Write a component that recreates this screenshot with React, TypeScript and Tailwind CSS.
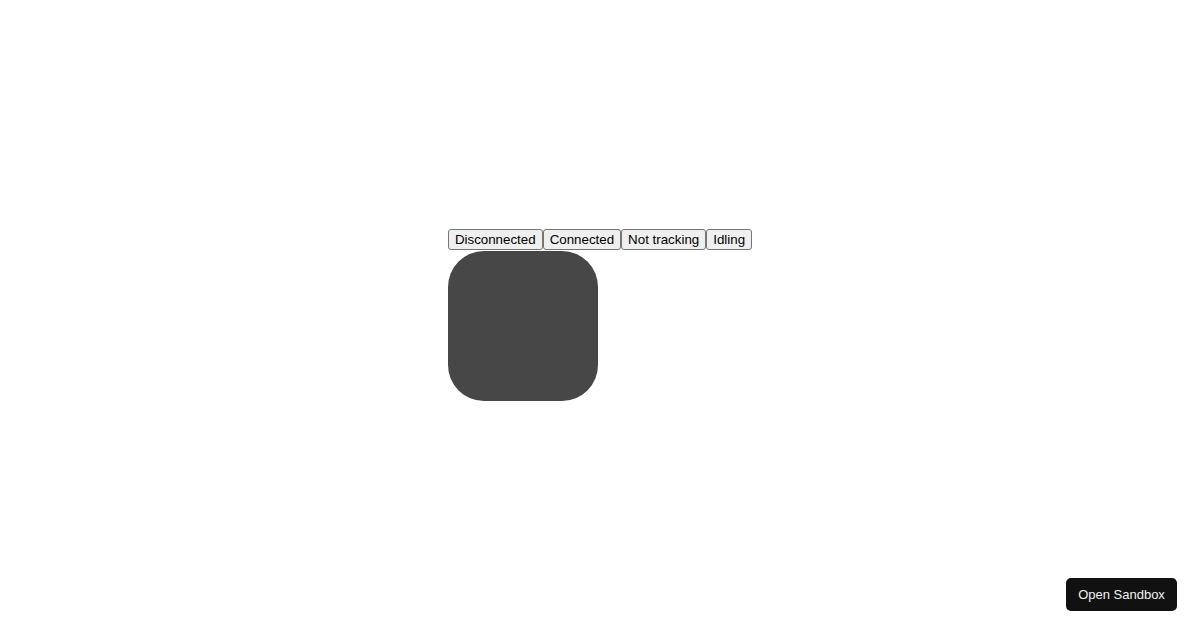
export default function App() {
  const states = ['Disconnected', 'Connected', 'Not tracking', 'Idling']

  return (
    <div className="relative flex h-[630px] w-full items-center justify-center bg-white font-['Liberation_Sans',Arial,sans-serif]">
      <div className="flex flex-col">
        <div className="flex">
          {states.map((s) => (
            <button
              key={s}
              className="h-[21px] rounded-[3px] border border-[#767676] bg-[#efefef] px-[6px] text-[13.33px] leading-none text-black"
            >
              {s}
            </button>
          ))}
        </div>
        <div className="mt-px h-[150px] w-[150px] rounded-[36px] bg-[#474747]" />
      </div>

      <button className="absolute bottom-[19px] right-[23px] h-[33px] w-[111px] rounded-[5px] bg-[#111111] text-[13px] text-[#f2f2f2]">
        Open Sandbox
      </button>
    </div>
  )
}
